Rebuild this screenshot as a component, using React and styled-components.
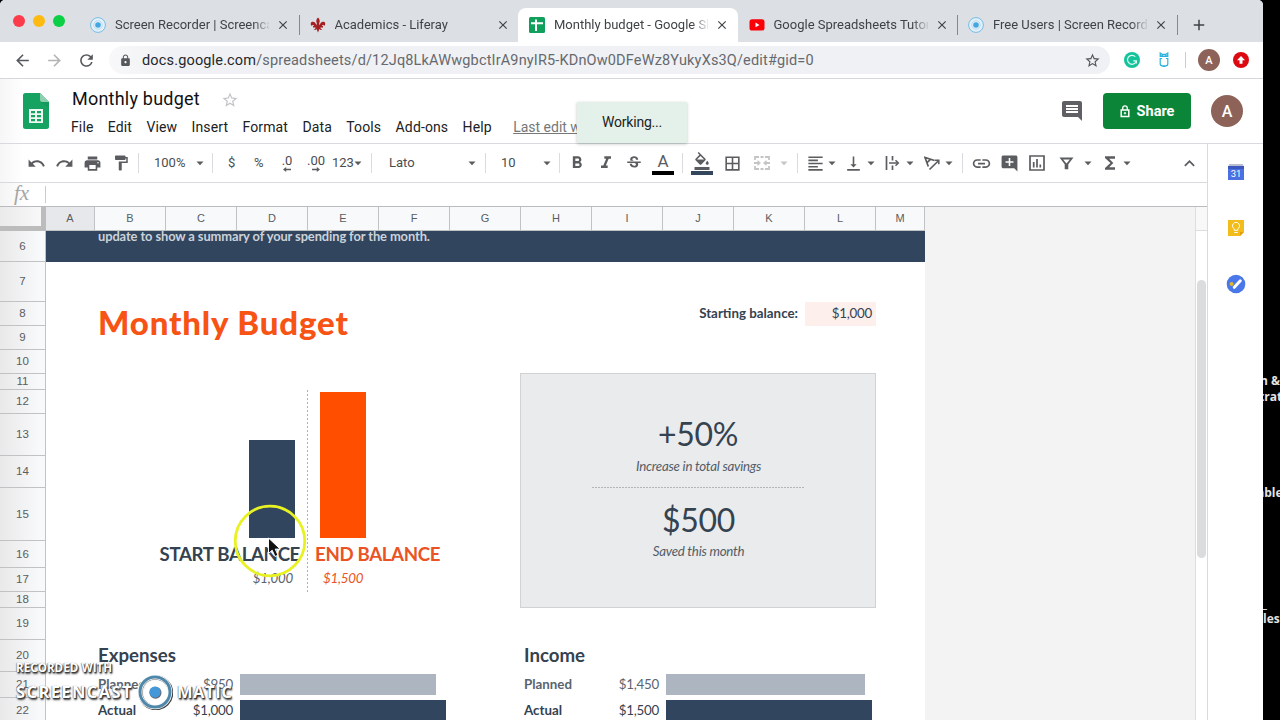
import React from "react";
import styled, { createGlobalStyle, css } from "styled-components";
import {
  MdAdd,
  MdAddComment,
  MdArrowBack,
  MdArrowForward,
  MdBorderAll,
  MdClose,
  MdComment,
  MdExpandLess,
  MdFormatAlignLeft,
  MdFormatBold,
  MdFormatColorFill,
  MdFormatItalic,
  MdFormatPaint,
  MdFunctions,
  MdLink,
  MdLock,
  MdPrint,
  MdRedo,
  MdRefresh,
  MdStarBorder,
  MdStrikethroughS,
  MdUndo,
  MdVerticalAlignBottom,
} from "react-icons/md";

const NAVY = "#31455f";
const ORANGE = "#ff4e00";
const INK = "#35424f";

const GlobalStyle = createGlobalStyle`
  * {
    box-sizing: border-box;
  }
  body {
    margin: 0;
    overflow: hidden;
    background: #000;
    font-family: Roboto, "Liberation Sans", sans-serif;
  }
  svg {
    display: block;
    flex: none;
  }
`;

const Screen = styled.div`
  position: relative;
  display: flex;
  width: 1280px;
  height: 720px;
  overflow: hidden;
  background: #000;
`;

const Browser = styled.div`
  display: flex;
  flex-direction: column;
  width: 1263px;
  height: 720px;
  overflow: hidden;
  background: #fff;
  border-radius: 5px 5px 0 0;
`;

/* ---------- browser chrome ---------- */

const TabStrip = styled.div`
  display: flex;
  align-items: flex-end;
  height: 42px;
  flex: none;
  background: #dcdfe4;
`;

const Lights = styled.div`
  display: flex;
  align-self: center;
  gap: 8px;
  width: 79px;
  padding-left: 13px;
`;

const Light = styled.span`
  width: 12px;
  height: 12px;
  border-radius: 50%;
  background: ${(props) => props.$color};
`;

const StyledTab = styled.div`
  display: flex;
  align-items: center;
  width: 219.5px;
  height: 34px;
  padding: 0 8px 0 11px;
  border-radius: 8px 8px 0 0;
  background: ${(props) => (props.$active ? "#fff" : "transparent")};
  color: #3f4347;
`;

const TabIcon = styled.span`
  width: 16px;
  margin-right: 9px;
`;

const TabTitle = styled.span`
  width: 154px;
  margin-right: 7px;
  overflow: hidden;
  white-space: nowrap;
  font-size: 13px;
  line-height: 18px;
  letter-spacing: 0;
  mask-image: linear-gradient(to right, #000 138px, transparent 156px);
`;

const TabDivider = styled.span`
  width: 1px;
  height: 20px;
  margin: 0 -1px 7px 0;
  background: #85898e;
`;

const NewTab = styled.span`
  padding: 0 0 8px 13px;
  color: #3f4347;
`;

const AddressBar = styled.div`
  display: flex;
  align-items: center;
  height: 37px;
  flex: none;
  padding-left: 13px;
  border-bottom: 1px solid #d5d7da;
  color: #55585c;
`;

const NavIcon = styled.span`
  width: 18px;
  margin-right: 14px;
  opacity: ${(props) => (props.$faded ? 0.45 : 1)};
`;

const Omnibox = styled.div`
  display: flex;
  align-items: center;
  width: 1001px;
  height: 28px;
  padding: 0 9px 0 10px;
  border-radius: 14px;
  background: linear-gradient(to right, #f8f8fa, #f0f1f4 60px);
`;

const Url = styled.span`
  flex: 1;
  margin-left: 10px;
  white-space: nowrap;
  font-size: 14.5px;
  letter-spacing: 0.16px;
  color: #66696e;

  b {
    font-weight: 400;
    color: #25282c;
  }
`;

const Extensions = styled.div`
  display: flex;
  align-items: center;
  margin-left: 14px;
`;

const OwlSlot = styled.span`
  margin-left: 19px;
`;

const ExtensionDivider = styled.span`
  width: 1px;
  height: 16px;
  margin: 0 12px 0 16px;
  background: #ccc;
`;

const Avatar = styled.span`
  display: flex;
  align-items: center;
  justify-content: center;
  width: ${(props) => props.$size}px;
  height: ${(props) => props.$size}px;
  border-radius: 50%;
  background: #8d6359;
  color: #fff;
  font-size: ${(props) => props.$size / 2}px;
  font-weight: 500;
`;

const UpdateDot = styled.span`
  margin-left: 13px;
`;

/* ---------- document header ---------- */

const DocHeader = styled.header`
  display: flex;
  height: 65px;
  flex: none;
  border-bottom: 1px solid #d8dadd;
  background: linear-gradient(to right, #f6f6f6, #fff 24px);
`;

const DocLogo = styled.div`
  width: 71px;
  padding: 14px 0 0 23px;
`;

const DocInfo = styled.div`
  flex: 1;
  padding-top: 8px;
`;

const TitleRow = styled.div`
  display: flex;
  align-items: center;
  height: 25px;
  gap: 21px;
  padding-left: 1px;
  color: #c2c4c6;
`;

const DocTitle = styled.span`
  font-size: 18px;
  line-height: 22px;
  padding-bottom: 1px;
  letter-spacing: 0.22px;
  color: #111;
`;

const MenuRow = styled.nav`
  display: flex;
  gap: 14.4px;
  padding-top: 6px;
  white-space: nowrap;
  font-size: 14px;
  line-height: 18px;
  color: #202124;
`;

const MenuItem = styled.span`
  letter-spacing: 0.12px;
`;

const LastEdit = styled.span`
  margin-left: 7px;
  text-decoration: underline;
  color: #777;
`;

const DocActions = styled.div`
  display: flex;
  align-items: center;
  padding-right: 20px;
  color: #5f6063;
`;

const ShareButton = styled.button`
  display: flex;
  align-items: center;
  justify-content: center;
  gap: 7px;
  width: 88px;
  height: 36px;
  margin: 0 20px 0 19px;
  padding: 0;
  border: 0;
  border-radius: 4px;
  background: #0b8638;
  color: #fff;
  font: 700 14.5px Roboto, sans-serif;
`;

const Toast = styled.div`
  position: absolute;
  top: 102px;
  left: 577px;
  width: 110px;
  height: 41px;
  background: #e4f1ea;
  box-shadow: 0 1px 3px rgba(0, 40, 20, 0.25);
  color: #222;
  font-size: 14px;
  line-height: 40px;
  letter-spacing: -0.2px;
  text-align: center;
`;

/* ---------- editor ---------- */

const Workspace = styled.div`
  display: flex;
  flex: 1;
  min-height: 0;
`;

const Editor = styled.main`
  display: flex;
  flex-direction: column;
  width: 1207px;
`;

const Toolbar = styled.div`
  display: flex;
  align-items: center;
  height: 39px;
  flex: none;
  border-bottom: 1px solid #d8dadd;
  background: linear-gradient(to right, #f6f6f6, #fff 24px);
  color: #5a5c5f;
`;

const Tool = styled.span`
  display: flex;
  flex-direction: column;
  align-items: center;
  justify-content: center;
  flex: none;
  width: ${(props) => props.$w || 20}px;
  margin-left: ${(props) => props.$gap}px;
  opacity: ${(props) => (props.$faded ? 0.35 : 1)};
`;

const ToolText = styled(Tool)`
  display: block;
  white-space: nowrap;
  font-size: 13px;
  line-height: 18px;
  padding-bottom: 1px;
  color: #4a4d50;
`;

const DecimalText = styled.span`
  height: 13px;
  font-size: 13px;
  line-height: 13px;
  color: #4a4d50;
`;

const Separator = styled.span`
  flex: none;
  width: 1px;
  height: 20px;
  margin-left: ${(props) => props.$gap}px;
  background: #dadce0;
`;

const ColorTool = styled(Tool)`
  height: 24px;
  border-bottom: 4px solid ${(props) => props.$color};
  font-size: 17px;
  line-height: 20px;
`;

const FormulaBar = styled.div`
  display: flex;
  align-items: center;
  height: 24px;
  flex: none;
  border-bottom: 1px solid #b9bbbe;
  background: linear-gradient(to right, #f4f4f4, #fff 30px);
`;

const Fx = styled.span`
  width: 46px;
  height: 17px;
  padding-left: 14px;
  border-right: 1px solid #c9cbcd;
  color: #a5a5a5;
  font: italic 21px/14px "Liberation Serif", serif;
`;

const SheetArea = styled.div`
  display: flex;
  flex: 1;
  min-height: 0;
  background: #f3f3f3;
`;

const COLUMNS = "46px 49px repeat(11, 71px) 49px";
const ROWS = [31, 40, 24, 24, 24, 16, 24, 42, 32, 53, 27, 24, 16, 32, 32, 26, 26];

const Sheet = styled.div`
  width: 925px;
  overflow: hidden;
`;

const ColumnHeaders = styled.div`
  display: grid;
  grid-template-columns: ${COLUMNS};
  height: 24px;
`;

const headerText = css`
  display: flex;
  align-items: center;
  justify-content: center;
  padding-bottom: 1px;
  font-family: "Liberation Sans", Arial, sans-serif;
  color: #5a5d60;
`;

const Corner = styled.div`
  border-right: 5px solid #bcbcbc;
  border-bottom: 5px solid #bcbcbc;
  background: linear-gradient(to right, #eaeaea, #f8f8f8);
`;

const ColumnHeader = styled.div`
  ${headerText}
  border-right: 1px solid #c0c2c4;
  border-bottom: 1px solid #c0c2c4;
  background: ${(props) => (props.$selected ? "#e7e8eb" : "#f8f9fb")};
  font-size: 11px;
`;

const Cells = styled.div`
  display: grid;
  grid-template-columns: ${COLUMNS};
  grid-template-rows: ${ROWS.map((h) => `${h}px`).join(" ")};
  background: #fff;
  color: ${INK};
  font-family: Lato, sans-serif;
  font-size: 13.33px;
`;

const RowHeader = styled.div`
  ${headerText}
  grid-area: ${(props) => props.$row - 5} / 1;
  border-right: 1px solid #c0c2c4;
  border-bottom: 1px solid #c0c2c4;
  background: linear-gradient(to right, #e9e9ea, #f8f9fa 40px);
  font-size: 11.5px;
`;

// $area is a plain grid-area: row / column / row end / column end
const Cell = styled.div`
  grid-area: ${(props) => props.$area};
  display: flex;
  align-items: ${(props) => props.$valign || "center"};
  justify-content: ${(props) => props.$align || "flex-start"};
  min-width: 0;
  padding: ${(props) => props.$pad || "0 4px 2px 3px"};
  white-space: nowrap;
  font-weight: ${(props) => (props.$bold ? 700 : 400)};
  font-style: ${(props) => (props.$italic ? "italic" : "normal")};
  letter-spacing: ${(props) => (props.$bold ? 0 : "-0.25px")};
  color: ${(props) => props.$color || "inherit"};
`;

const Banner = styled(Cell)`
  align-items: flex-start;
  padding: 0 0 0 52px;
  background: ${NAVY};
  color: #cbd2d9;
  font-weight: 700;
  font-size: 12.9px;
  line-height: 10px;
  letter-spacing: -0.1px;
`;

const BudgetTitle = styled(Cell)`
  font-size: 33px;
  font-weight: 900;
  letter-spacing: 0.85px;
  color: #f65314;
`;

const BalanceInput = styled(Cell)`
  background: #fcefec;
`;

const BalanceLabel = styled(Cell)`
  font-size: 18.67px;
  font-weight: 700;
  letter-spacing: -0.35px;
`;

const ChartBar = styled.div`
  width: 46px;
  background: ${(props) => props.$color};
`;

const DottedColumn = styled.div`
  grid-area: 7 / 5 / 13 / 6;
  justify-self: end;
  width: 1px;
  background: repeating-linear-gradient(#aeb0b3 0 2px, transparent 2px 4px);
`;

const DottedRow = styled.div`
  grid-area: 9 / 10 / 10 / 13;
  align-self: end;
  height: 1px;
  background: repeating-linear-gradient(to right, #b4b5b8 0 2px, transparent 2px 3px);
`;

const SummaryBox = styled.div`
  grid-area: 6 / 9 / 14 / 14;
  margin: -1px 0 0 -1px;
  border: 1px solid #d0d2d4;
  background: #eaebed;
`;

const BigNumber = styled(Cell)`
  justify-content: center;
  font-size: 32px;
  letter-spacing: -0.3px;
  line-height: 40px;
`;

const SectionTitle = styled(Cell)`
  font-size: 18.67px;
  font-weight: 700;
`;

const BudgetBar = styled.div`
  height: 21px;
  background: ${(props) => props.$color};
`;

const Scrollbar = styled.div`
  width: 12px;
  margin-left: auto;
  border-left: 1px solid #dcdddf;
  background: #fff;
`;

const ScrollTop = styled.div`
  height: 24px;
  border-bottom: 1px solid #dcdddf;
  background: #f8f8f8;
`;

const Thumb = styled.div`
  width: 9px;
  height: 278px;
  margin: 49px 0 0 1px;
  border-radius: 4.5px;
  background: #dbdcde;
`;

const SidePanel = styled.aside`
  display: flex;
  flex-direction: column;
  align-items: center;
  flex: 1;
  gap: 36px;
  padding-top: 18px;
  border-left: 1px solid #d8dadd;
`;

/* ---------- what lies around and over the window ---------- */

const Desktop = styled.div`
  display: flex;
  flex-direction: column;
  flex: 1;
  padding-top: 373px;
  overflow: hidden;
  color: #e4e4e4;
  font: 700 12px/16px "Open Sans", sans-serif;
  white-space: nowrap;
`;

const FileLabel = styled.span`
  margin: ${(props) => props.$top || 0}px 0 0 ${(props) => props.$left}px;
`;

const Pointer = styled.svg`
  position: absolute;
  left: 230px;
  top: 500px;
`;

const Watermark = styled.div`
  position: absolute;
  left: 16px;
  top: 660px;
  color: #fff;
  font-family: "Open Sans", sans-serif;
  font-weight: 700;
  white-space: nowrap;
  text-shadow: 1px 1px 1px #333, 1px 2px 2px #444, -0.5px -0.5px 1px #777;
`;

const WatermarkTop = styled.div`
  font-size: 11.5px;
  line-height: 15px;
  letter-spacing: 0.1px;
`;

const WatermarkRow = styled.div`
  display: flex;
  align-items: center;
  margin-top: -2px;
  height: 37px;
  font-size: 16.5px;

  svg {
    margin: 0 4px;
  }
`;

const WatermarkWord = styled.span`
  letter-spacing: ${(props) => props.$spacing}px;
`;

/* ---------- icons ---------- */

const RecorderIcon = () => (
  <svg width="16" height="16" viewBox="0 0 16 16">
    <circle cx="8" cy="8" r="7.4" fill="#e4f0f8" stroke="#74bce4" />
    <circle cx="8" cy="8" r="4.3" fill="none" stroke="#a9d3ec" strokeWidth=".7" />
    <circle cx="8" cy="8" r="2.8" fill="#45a7df" />
  </svg>
);

const FleurIcon = () => (
  <svg width="16" height="16" viewBox="0 0 16 16">
    <path
      d="M8 .5c1.7 1.8 2.3 3.5 1.1 6 .4 1 .5 1.4.5 1.9.5-2.6 2.2-4.2 4.2-3.6 2 .7 1.7 3.4.3 4.2-.1-1.200-1.700-1.700-2.300-.1H13v1.600h-2.600c.2 1.400 1 2 1.900 2.300-1.300.5-2.200 0-2.900-.8L8 15.500 6.600 12c-.7.8-1.600 1.300-2.900.8.900-.3 1.700-.9 1.900-2.300H3V8.900h1.200c-.6-1.600-2.200-1.100-2.300.1C.5 8.200.2 5.500 2.200 4.800c2-.6 3.700 1 4.200 3.600 0-.5.1-.9.5-1.900C5.700 4 6.300 2.300 8 .5z"
      fill="#a51e22"
    />
  </svg>
);

const SheetsTabIcon = () => (
  <svg width="16" height="16" viewBox="0 0 16 16">
    <rect width="16" height="16" rx="1.5" fill="#11a05c" />
    <path d="M7 2.500V14M2 6.300h12" stroke="#fff" strokeWidth="2" fill="none" />
  </svg>
);

const YouTubeIcon = () => (
  <svg width="16" height="16" viewBox="0 0 16 16">
    <rect y="2.3" x=".5" width="15" height="11.2" rx="2.6" fill="#fb0007" />
    <path d="M6.500 5.600v4.600L10.500 8z" fill="#fff" />
  </svg>
);

const GrammarlyIcon = () => (
  <svg width="16" height="16" viewBox="0 0 16 16">
    <circle cx="8" cy="8" r="8" fill="#15c39a" />
    <path d="M11.300 4.700A4.500 4.500 0 1 0 12.400 8.800H9.300M12.400 8.800v2.700" fill="none" stroke="#dffaf2" strokeWidth="1.2" />
  </svg>
);

const OwlIcon = () => (
  <svg width="10" height="16" viewBox="0 0 10 16" fill="none" stroke="#28b4dc" strokeWidth="1.2">
    <path d="M1.200 1l1.800 1.300h4L8.800 1v3.500H1.200zM1.500 4.500L5 2.500l3.500 2" />
    <path d="M3 6.500H1.200v5.300a2 2 0 0 0 2 2h3.600a2 2 0 0 0 2-2V6.500H7M3.500 14.500h3" />
  </svg>
);

const UpdateIcon = () => (
  <svg width="16" height="16" viewBox="0 0 16 16">
    <circle cx="8" cy="8" r="8" fill="#dc0a10" />
    <path d="M8 4l4 4.300H9.500V11.800h-3V8.300H4z" fill="#fff" />
  </svg>
);

const SheetsLogo = () => (
  <svg width="26" height="36" viewBox="0 0 26 36">
    <path d="M2.500 0H17l9 9v24.500a2.500 2.500 0 0 1-2.500 2.500h-21A2.500 2.500 0 0 1 0 33.500v-31A2.500 2.500 0 0 1 2.500 0z" fill="#16a362" />
    <path d="M17 0l9 9h-6.500A2.500 2.500 0 0 1 17 6.500z" fill="#8dd0b0" />
    <path d="M17 9h9v6z" fill="#11905a" opacity=".5" />
    <path d="M6 16h14v14H6zM8 18v2.300h4V18zm6 0v2.300h4V18zm-6 4v2.300h4V22zm6 0v2.300h4V22zm-6 4v2.300h4V26zm6 0v2.300h4V26z" fill="#eef9f3" fillRule="evenodd" />
  </svg>
);

const ShareLock = () => (
  <svg width="10" height="13" viewBox="0 0 10 13" fill="none" stroke="#fff">
    <path d="M2.700 5V3.200a2.300 2.300 0 0 1 4.600 0V5" strokeWidth="1.3" />
    <rect x="1.200" y="5" width="7.6" height="6.5" strokeWidth="1.5" />
    <circle cx="5" cy="8.2" r=".8" fill="#fff" strokeWidth=".8" />
  </svg>
);

const CaretIcon = () => (
  <svg width="8" height="5" viewBox="0 0 8 5">
    <path d="M.5.500h7L4 4.300z" fill="currentColor" />
  </svg>
);

const DecimalArrow = ({ right }) => (
  <svg width="8" height="5" viewBox="0 0 8 5" fill="currentColor">
    <path d={right ? "M0 1.800h4.800V0L8 2.500 4.800 5V3.200H0z" : "M8 1.800H3.200V0L0 2.500 3.200 5V3.200H8z"} />
  </svg>
);

const MergeIcon = () => (
  <svg width="16" height="14" viewBox="0 0 16 14" fill="none" stroke="currentColor" strokeWidth="1.8">
    <path d="M5 1H1v3M6.500 1h3M11 1h4v3M1 10v3h4M6.500 13h3M11 13h4v-3M0 7h5M16 7h-5" />
    <path d="M3.500 4.700L6 7 3.500 9.300M12.500 4.700L10 7l2.500 2.300" strokeWidth="1.3" />
  </svg>
);

const WrapIcon = () => (
  <svg width="15" height="16" viewBox="0 0 15 16" fill="none" stroke="currentColor" strokeWidth="1.7">
    <path d="M1.500 1v14M7.500 1v4.500M7.500 10.500V15M4 8h9" />
    <path d="M10.500 5.300L13.300 8l-2.800 2.700" strokeWidth="1.5" />
  </svg>
);

const RotateIcon = () => (
  <svg width="16" height="15" viewBox="0 0 16 15" fill="none" stroke="currentColor" strokeWidth="1.7">
    <path d="M4.300 10.500L1 1.500l9.500 3M2.700 6.800L6.500 3.300M5.500 13.500L14.200 5" />
    <path d="M10.800 4.300h4v4" strokeWidth="1.5" />
  </svg>
);

const ChartIcon = () => (
  <svg width="16" height="16" viewBox="0 0 16 16" fill="none" stroke="currentColor" strokeWidth="1.7">
    <path d="M1 1h14v14H1zM4.700 7v5.500M8 4v8.500M11.300 9.500v3" />
  </svg>
);

const FilterIcon = () => (
  <svg width="15" height="13" viewBox="0 0 15 13" fill="currentColor">
    <path d="M.5.500h14L9.300 7.200v5H5.700v-5zm3.600 1.900l3.400 4.200 3.400-4.200z" fillRule="evenodd" />
  </svg>
);

const CalendarIcon = () => (
  <svg width="20" height="20" viewBox="0 0 20 20">
    <path d="M3 2h14l1 4H2z" fill="#b9bfd0" />
    <path d="M2 5h16v13H2z" fill="#4a70e2" />
    <path d="M2 4h16v3H2z" fill="#3c57bd" />
    <text x="10" y="15" fill="#fff" fontSize="9.5" textAnchor="middle" fontFamily="Roboto, sans-serif">
      31
    </text>
  </svg>
);

const KeepIcon = () => (
  <svg width="20" height="20" viewBox="0 0 20 20">
    <path d="M2 2h16v12l-4 4H2z" fill="#f2bd1a" />
    <path d="M18 14l-4 4v-4z" fill="#e39b12" />
    <path d="M8.300 12.300v-1.400a3.500 3.500 0 1 1 3.400 0v1.400zM8.300 14.500h3.400" fill="none" stroke="#fff" />
  </svg>
);

const TasksIcon = () => (
  <svg width="20" height="20" viewBox="0 0 20 20">
    <circle cx="10" cy="10" r="9.3" fill="#4a78e8" />
    <path d="M8.300 13.300l6-6.500" stroke="#fff" strokeWidth="3" strokeLinecap="round" />
    <circle cx="5.600" cy="10" r="2" fill="#e3b72a" />
  </svg>
);

const RecorderMark = () => (
  <svg width="36" height="36" viewBox="0 0 36 36">
    <circle cx="18.800" cy="18.800" r="15" fill="none" stroke="#444" strokeWidth="5" />
    <circle cx="18" cy="18" r="15" fill="none" stroke="#fff" strokeWidth="4.5" />
    <circle cx="18" cy="18" r="15" fill="none" stroke="#4f87aa" strokeWidth="3" />
    <circle cx="18" cy="18" r="12.5" fill="#fff" opacity=".9" />
    <circle cx="18.500" cy="18.700" r="6" fill="#667" />
    <circle cx="18" cy="18" r="5.6" fill="#4498d8" />
  </svg>
);

/* ---------- content ---------- */

const tabs = [
  { title: "Screen Recorder | Screencast", Icon: RecorderIcon, divider: true },
  { title: "Academics - Liferay", Icon: FleurIcon },
  { title: "Monthly budget - Google Sheets", Icon: SheetsTabIcon, active: true },
  { title: "Google Spreadsheets Tutorial", Icon: YouTubeIcon, divider: true },
  { title: "Free Users | Screen Recorder", Icon: RecorderIcon, divider: true },
];

const menus = ["File", "Edit", "View", "Insert", "Format", "Data", "Tools", "Add-ons", "Help"];

const budgets = [
  {
    title: "Expenses",
    column: 3,
    rows: [
      { label: "Planned", amount: "$950", width: 196, color: "#acb5c0", ink: "#5a6470" },
      { label: "Actual", amount: "$1,000", width: 206, color: NAVY },
    ],
  },
  {
    title: "Income",
    column: 9,
    rows: [
      { label: "Planned", amount: "$1,450", width: 199, color: "#acb5c0", ink: "#5a6470" },
      { label: "Actual", amount: "$1,500", width: 206, color: NAVY },
    ],
  },
];

const Caret = ({ gap, faded }) => (
  <Tool $w={8} $gap={gap} $faded={faded}>
    <CaretIcon />
  </Tool>
);

const Tab = ({ title, Icon, active, divider }) => (
  <>
    <StyledTab $active={active}>
      <TabIcon>
        <Icon />
      </TabIcon>
      <TabTitle>{title}</TabTitle>
      <MdClose size={14} />
    </StyledTab>
    {divider && <TabDivider />}
  </>
);

const BrowserChrome = () => (
  <>
    <TabStrip>
      <Lights>
        <Light $color="#fc3b4b" />
        <Light $color="#fdbb12" />
        <Light $color="#0bd046" />
      </Lights>
      {tabs.map((tab) => (
        <Tab key={tab.title} {...tab} />
      ))}
      <NewTab>
        <MdAdd size={18} />
      </NewTab>
    </TabStrip>
    <AddressBar>
      <NavIcon>
        <MdArrowBack size={19} />
      </NavIcon>
      <NavIcon $faded>
        <MdArrowForward size={19} />
      </NavIcon>
      <NavIcon>
        <MdRefresh size={19} />
      </NavIcon>
      <Omnibox>
        <MdLock size={13} />
        <Url>
          <b>docs.google.com</b>
          /spreadsheets/d/12Jq8LkAWwgbctIrA9nyIR5-KDnOw0DFeWz8YukyXs3Q/edit#gid=0
        </Url>
        <MdStarBorder size={17} />
      </Omnibox>
      <Extensions>
        <GrammarlyIcon />
        <OwlSlot>
          <OwlIcon />
        </OwlSlot>
        <ExtensionDivider />
        <Avatar $size={22}>A</Avatar>
        <UpdateDot>
          <UpdateIcon />
        </UpdateDot>
      </Extensions>
    </AddressBar>
  </>
);

const Header = () => (
  <DocHeader>
    <DocLogo>
      <SheetsLogo />
    </DocLogo>
    <DocInfo>
      <TitleRow>
        <DocTitle>Monthly budget</DocTitle>
        <MdStarBorder size={18} />
      </TitleRow>
      <MenuRow>
        {menus.map((menu) => (
          <MenuItem key={menu}>{menu}</MenuItem>
        ))}
        <LastEdit>Last edit was</LastEdit>
      </MenuRow>
    </DocInfo>
    <DocActions>
      <MdComment size={24} />
      <ShareButton>
        <ShareLock />
        Share
      </ShareButton>
      <Avatar $size={32}>A</Avatar>
    </DocActions>
  </DocHeader>
);

const EditorToolbar = () => (
  <Toolbar>
    <Tool $gap={26}><MdUndo size={19} /></Tool>
    <Tool $gap={8}><MdRedo size={19} /></Tool>
    <Tool $gap={8}><MdPrint size={19} /></Tool>
    <Tool $gap={9}><MdFormatPaint size={18} /></Tool>
    <Separator $gap={7} />
    <ToolText $w={30} $gap={15}>100%</ToolText>
    <Caret gap={12} />
    <Separator $gap={8} />
    <ToolText $w={10} $gap={15}>$</ToolText>
    <ToolText $w={12} $gap={16}>%</ToolText>
    <Tool $w={18} $gap={12}>
      <DecimalText>.0</DecimalText>
      <DecimalArrow />
    </Tool>
    <Tool $w={20} $gap={10}>
      <DecimalText>.00</DecimalText>
      <DecimalArrow right />
    </Tool>
    <ToolText $w={22} $gap={6}>123</ToolText>
    <Caret gap={0} />
    <Separator $gap={9} />
    <ToolText $w={26} $gap={17}>Lato</ToolText>
    <Caret gap={53} />
    <Separator $gap={9} />
    <ToolText $w={14} $gap={15}>10</ToolText>
    <Caret gap={28} />
    <Separator $gap={8} />
    <Tool $gap={7}><MdFormatBold size={20} /></Tool>
    <Tool $gap={9}><MdFormatItalic size={20} /></Tool>
    <Tool $gap={8}><MdStrikethroughS size={18} /></Tool>
    <ColorTool $w={22} $gap={8} $color="#000">A</ColorTool>
    <Separator $gap={8} />
    <ColorTool $w={22} $gap={8} $color="#34465c">
      <MdFormatColorFill size={18} />
    </ColorTool>
    <Tool $gap={9}><MdBorderAll size={19} /></Tool>
    <Tool $gap={10} $faded><MergeIcon /></Tool>
    <Caret gap={8} faded />
    <Separator $gap={9} />
    <Tool $gap={7}><MdFormatAlignLeft size={19} /></Tool>
    <Caret gap={3} />
    <Tool $gap={7}><MdVerticalAlignBottom size={19} /></Tool>
    <Caret gap={4} />
    <Tool $gap={7}><WrapIcon /></Tool>
    <Caret gap={4} />
    <Tool $gap={8}><RotateIcon /></Tool>
    <Caret gap={3} />
    <Separator $gap={9} />
    <Tool $gap={8}><MdLink size={21} /></Tool>
    <Tool $gap={8}><MdAddComment size={19} /></Tool>
    <Tool $gap={8}><ChartIcon /></Tool>
    <Tool $gap={9}><FilterIcon /></Tool>
    <Caret gap={8} />
    <Tool $gap={8}><MdFunctions size={20} /></Tool>
    <Caret gap={3} />
    <Tool $gap={48}><MdExpandLess size={21} /></Tool>
  </Toolbar>
);

const Budget = ({ title, column, rows }) => (
  <>
    <SectionTitle $area={`15 / ${column}`} $bold>{title}</SectionTitle>
    {rows.map((row, index) => (
      <React.Fragment key={row.label}>
        <Cell $area={`${16 + index} / ${column}`} $bold $color={row.ink}>
          {row.label}
        </Cell>
        <Cell $area={`${16 + index} / ${column + 1}`} $align="flex-end" $color={row.ink}>
          {row.amount}
        </Cell>
        <Cell $area={`${16 + index} / ${column + 2} / auto / span 3`} $valign="flex-start" $pad="2px 0 0 3px">
          <BudgetBar $color={row.color} style={{ width: row.width }} />
        </Cell>
      </React.Fragment>
    ))}
  </>
);

const Spreadsheet = () => (
  <Sheet>
    <ColumnHeaders>
      <Corner />
      {"ABCDEFGHIJKLM".split("").map((letter) => (
        <ColumnHeader key={letter} $selected={letter === "A"}>
          {letter}
        </ColumnHeader>
      ))}
    </ColumnHeaders>
    <Cells>
      {ROWS.map((height, index) => (
        <RowHeader key={index} $row={index + 6}>
          {index + 6}
        </RowHeader>
      ))}
      <Banner $area="1 / 2 / 2 / 15">update to show a summary of your spending for the month.</Banner>
      <BudgetTitle $area="3 / 3 / 5 / 8" $pad="0 0 8px 3px">Monthly Budget</BudgetTitle>
      <Cell $area="3 / 11 / 4 / 13" $align="flex-end" $bold $pad="0 7px 2px 0">
        Starting balance:
      </Cell>
      <BalanceInput $area="3 / 13" $align="flex-end">$1,000</BalanceInput>

      <Cell $area="7 / 5 / 11 / 6" $valign="flex-end" $pad="0 0 3px 12px">
        <ChartBar $color={NAVY} style={{ height: 98 }} />
      </Cell>
      <Cell $area="7 / 6 / 11 / 7" $valign="flex-end" $pad="0 0 3px 12px">
        <ChartBar $color={ORANGE} style={{ height: 146 }} />
      </Cell>
      <BalanceLabel $area="11 / 3 / 12 / 6" $align="flex-end" $pad="0 8px 2px 0">START BALANCE</BalanceLabel>
      <BalanceLabel $area="11 / 6 / 12 / 9" $color="#ea5424" $pad="0 0 2px 7px">END BALANCE</BalanceLabel>
      <Cell $area="12 / 5" $italic $align="flex-end" $pad="0 15px 4px 0" $color="#59626c">$1,000</Cell>
      <Cell $area="12 / 6" $italic $pad="0 0 4px 15px" $color="#ea5424">$1,500</Cell>
      <DottedColumn />

      <SummaryBox />
      <BigNumber $area="8 / 9 / 9 / 14">+50%</BigNumber>
      <Cell $area="9 / 9 / 10 / 14" $align="center" $valign="flex-start" $italic $pad="2px 0 0" $color="#545d67">
        Increase in total savings
      </Cell>
      <DottedRow />
      <BigNumber $area="10 / 9 / 11 / 14" $pad="10px 0 0">$500</BigNumber>
      <Cell $area="11 / 9 / 12 / 14" $align="center" $valign="flex-start" $italic $pad="2px 0 0" $color="#545d67">
        Saved this month
      </Cell>

      {budgets.map((budget) => (
        <Budget key={budget.title} {...budget} />
      ))}
    </Cells>
  </Sheet>
);

const App = () => (
  <Screen>
    <GlobalStyle />
    <Browser>
      <BrowserChrome />
      <Header />
      <Workspace>
        <Editor>
          <EditorToolbar />
          <FormulaBar>
            <Fx>fx</Fx>
          </FormulaBar>
          <SheetArea>
            <Spreadsheet />
            <Scrollbar>
              <ScrollTop />
              <Thumb />
            </Scrollbar>
          </SheetArea>
        </Editor>
        <SidePanel>
          <CalendarIcon />
          <KeepIcon />
          <TasksIcon />
        </SidePanel>
      </Workspace>
    </Browser>
    <Desktop>
      <FileLabel $left={-3}>n &amp;</FileLabel>
      <FileLabel $left={-4}>trat</FileLabel>
      <FileLabel $top={80} $left={-6}>able</FileLabel>
      <FileLabel $top={95} $left={-1}>_</FileLabel>
      <FileLabel $top={-1} $left={0}>les</FileLabel>
    </Desktop>
    <Toast>Working...</Toast>
    <Pointer width="80" height="80" viewBox="0 0 80 80">
      <circle cx="40" cy="41" r="34.8" fill="none" stroke="#e8f222" strokeWidth="2.8" />
      <path d="M38.500 38v15.500l3.700-3.300 2.800 6.300 3-1.300-2.800-6.100h5z" fill="#111" stroke="#fff" strokeWidth="1" />
    </Pointer>
    <Watermark>
      <WatermarkTop>RECORDED WITH</WatermarkTop>
      <WatermarkRow>
        <WatermarkWord $spacing={1.4}>SCREENCAST</WatermarkWord>
        <RecorderMark />
        <WatermarkWord $spacing={0.6}>MATIC</WatermarkWord>
      </WatermarkRow>
    </Watermark>
  </Screen>
);

export default App;
